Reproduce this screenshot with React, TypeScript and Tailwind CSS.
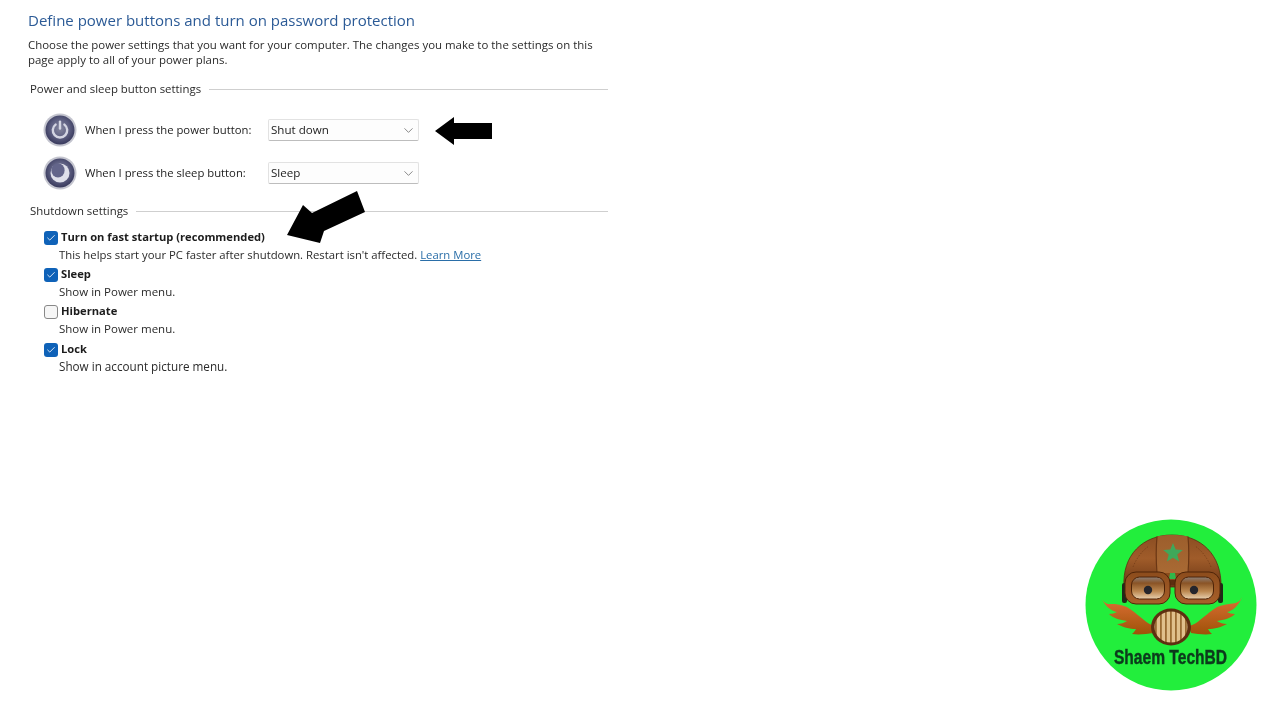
import { ChevronDown, Check } from "lucide-react";

function PowerOrb({ kind }: { kind: "power" | "sleep" }) {
  const id = `orb-${kind}`;
  return (
    <svg width="34" height="34" viewBox="0 0 34 34" className="shrink-0 blur-[0.4px]">
      <defs>
        <radialGradient id={id} cx="50%" cy="45%" r="55%">
          <stop offset="0%" stopColor="#85879f" />
          <stop offset="60%" stopColor="#5c5e80" />
          <stop offset="100%" stopColor="#38395c" />
        </radialGradient>
      </defs>
      <circle cx="17" cy="17" r="16.5" fill="#c4c5cf" />
      <circle cx="17" cy="17" r="14.5" fill={`url(#${id})`} />
      {kind === "power" ? (
        <g fill="none" stroke="#d3d5e2" strokeWidth="2.4" strokeLinecap="round">
          <path d="M12.6 11.6a7.2 7.2 0 1 0 8.8 0" />
          <path d="M17 8.6v7" />
        </g>
      ) : (
        <g>
          <circle cx="17" cy="17" r="9.5" fill="#dfe0ea" />
          <ellipse cx="15" cy="14.4" rx="6.6" ry="7.2" fill="#63658a" />
        </g>
      )}
    </svg>
  );
}

function FakeSelect({ value }: { value: string }) {
  return (
    <div className="flex h-[22px] w-[151px] items-center justify-between rounded-[2px] border border-[#e2e2e2] border-b-[#bdbdbd] bg-[#fdfdfd] pl-[2px] pr-[2px] text-[11.6px] text-[#222]">
      <span>{value}</span>
      <ChevronDown size={15} strokeWidth={1.1} className="text-[#555]" />
    </div>
  );
}

function SectionHeading({ title }: { title: string }) {
  return (
    <div className="flex items-center gap-[8px] pl-[2px] text-[11.4px] leading-[16px] text-[#2a2a2a]">
      <span>{title}</span>
      <div className="h-px flex-1 bg-[#cfcfcf]" />
    </div>
  );
}

function Option({
  label,
  note,
  checked,
  noteClass,
  children,
}: {
  label: string;
  note: string;
  checked: boolean;
  noteClass: string;
  children?: React.ReactNode;
}) {
  return (
    <div className="pl-[16px]">
      <div className="flex h-[17px] items-center gap-[3px]">
        {checked ? (
          <div className="flex h-[14px] w-[14px] items-center justify-center rounded-[3px] bg-[#0f62b8]">
            <Check size={10} strokeWidth={2} className="text-white" />
          </div>
        ) : (
          <div className="h-[14px] w-[14px] rounded-[3px] border border-[#888] bg-[#f6f6f6]" />
        )}
        <span className="text-[11.2px] font-bold text-[#1c1c1c]">{label}</span>
      </div>
      <div className={`h-[17px] pl-[15px] leading-[17px] text-[#2a2a2a] ${noteClass}`}>
        {note}
        {children}
      </div>
    </div>
  );
}

const leftWing =
  "M17 80C20 86 25 85 30 85C36 86 41 87 45 90C51 94 55 98 59 101C62 104 66 106 70 107L68 114C62 115 54 116 47 115C49 113 50 112 51 110C45 110 37 108 32 105C36 105 39 104 42 102C35 101 28 99 24 95C27 95 30 94 32 93C26 92 20 87 17 80Z";
const rightWing =
  "M157 78C154 85 149 84 144 85C138 86 133 87 129 90C123 94 119 98 115 101C112 104 108 106 104 107L106 114C112 115 120 116 127 115C125 113 124 112 123 110C129 110 137 108 142 105C138 105 135 104 132 102C139 101 146 99 150 95C147 95 144 94 142 93C148 92 154 86 157 78Z";

function Logo() {
  return (
    <svg width="172" height="172" viewBox="0 0 172 172" className="absolute left-[1085px] top-[519px] blur-[0.3px]">
      <defs>
        <linearGradient id="dome" x1="0" y1="0" x2="0" y2="1">
          <stop offset="0%" stopColor="#8a4d22" />
          <stop offset="45%" stopColor="#a05c2a" />
          <stop offset="100%" stopColor="#6a3614" />
        </linearGradient>
        <linearGradient id="stripe" x1="0" y1="0" x2="0" y2="1">
          <stop offset="0%" stopColor="#9c5e2c" />
          <stop offset="100%" stopColor="#a96a34" />
        </linearGradient>
        <linearGradient id="frame" x1="0" y1="0" x2="0" y2="1">
          <stop offset="0%" stopColor="#8c4c1c" />
          <stop offset="100%" stopColor="#a8602a" />
        </linearGradient>
        <linearGradient id="lens" x1="0" y1="0" x2="0" y2="1">
          <stop offset="0%" stopColor="#8d8078" />
          <stop offset="28%" stopColor="#8a5426" />
          <stop offset="65%" stopColor="#bc8850" />
          <stop offset="100%" stopColor="#e8d0b0" />
        </linearGradient>
        <linearGradient id="wing" x1="0" y1="0" x2="0" y2="1">
          <stop offset="0%" stopColor="#dc6e34" />
          <stop offset="100%" stopColor="#9e5208" />
        </linearGradient>
        <pattern id="grille" width="5" height="4" patternUnits="userSpaceOnUse">
          <rect width="5" height="4" fill="#e0c08c" />
          <rect width="1.8" height="4" fill="#9a6c32" />
        </pattern>
      </defs>
      <circle cx="86" cy="86" r="85.5" fill="#22ee3c" />
      <path d={leftWing} fill="url(#wing)" />
      <path d={rightWing} fill="url(#wing)" />
      {/* helmet */}
      <path d="M39 68C37 36 58 16 87 16s50 20 49 52z" fill="url(#dome)" stroke="#5c2e10" strokeWidth="0.8" />
      <path d="M72 17.5C71 28 71 42 72 54H103C104 42 104 28 103 17.5C93 15.6 82 15.6 72 17.5Z" fill="url(#stripe)" />
      <path d="M72 17.5C71 28 71 42 72 54M103 17.5C104 28 104 42 103 54" fill="none" stroke="#6a3614" strokeWidth="1.2" />
      <path d="M48 48C52 38 58 31 64 27M126 48C122 38 116 31 110 27" fill="none" stroke="#6a3614" strokeWidth="0.6" strokeDasharray="1.5 1.5" />
      <path
        d="M88 24l2.7 6.6 7.1.5-5.5 4.5 1.8 6.9-6.1-3.8-6.1 3.8 1.8-6.9-5.5-4.5 7.1-.5z"
        fill="#3fa85a"
      />
      {/* goggles */}
      <rect x="37" y="64" width="5" height="20" rx="2" fill="#1f2a18" />
      <rect x="133" y="64" width="5" height="20" rx="2" fill="#1f2a18" />
      <path d="M80 54H95L93 64H82Z" fill="#8c4c1c" />
      <path d="M85 54H90L91 60H84Z" fill="#2fb84a" />
      <rect x="80" y="61" width="15" height="5" fill="#5c2e10" />
      <rect x="40" y="53" width="45" height="32" rx="11" fill="url(#frame)" stroke="#4e2408" strokeWidth="1" />
      <rect x="90" y="53" width="45" height="32" rx="11" fill="url(#frame)" stroke="#4e2408" strokeWidth="1" />
      <rect x="46.5" y="58" width="33" height="22" rx="8" fill="url(#lens)" stroke="#4e2408" strokeWidth="1" />
      <rect x="95.5" y="58" width="33" height="22" rx="8" fill="url(#lens)" stroke="#4e2408" strokeWidth="1" />
      <circle cx="63" cy="71" r="4.2" fill="#25252c" />
      <circle cx="109" cy="71" r="4.2" fill="#25252c" />
      {/* mask */}
      <ellipse cx="86" cy="108" rx="20" ry="18.5" fill="#5e2f10" />
      <ellipse cx="86" cy="108" rx="16.5" ry="15.5" fill="url(#grille)" />
      <text
        transform="translate(85.5 145) scale(0.78 1)"
        textAnchor="middle"
        fontFamily="'Liberation Sans', sans-serif"
        fontWeight="700"
        fontSize="20"
        fill="#0c3a1c"
        stroke="#0c3a1c"
        strokeWidth="0.4"
      >
        Shaem TechBD
      </text>
    </svg>
  );
}

export default function App() {
  return (
    <div
      className="relative h-[720px] w-[1280px] overflow-hidden bg-white"
      style={{ fontFamily: "'Open Sans', 'Noto Sans', sans-serif" }}
    >
      <div className="ml-[28px] w-[580px] pt-[10px] blur-[0.3px]">
        <h1 className="text-[15px] leading-[20px] text-[#2b5a96]">
          Define power buttons and turn on password protection
        </h1>
        <p className="mt-[6px] w-[580px] translate-y-[1px] text-[11.45px] leading-[15px] text-[#2a2a2a]">
          Choose the power settings that you want for your computer. The changes you make to the settings on this page
          apply to all of your power plans.
        </p>

        <div className="mt-[15px]">
          <SectionHeading title="Power and sleep button settings" />
        </div>

        <div className="mt-[16px] flex flex-col gap-[9px] pl-[15px]">
          <div className="flex h-[34px] items-center">
            <PowerOrb kind="power" />
            <span className="ml-[8px] w-[183px] text-[11.3px] text-[#222]">When I press the power button:</span>
            <FakeSelect value="Shut down" />
          </div>
          <div className="flex h-[34px] items-center">
            <PowerOrb kind="sleep" />
            <span className="ml-[8px] w-[183px] text-[11.3px] text-[#222]">When I press the sleep button:</span>
            <FakeSelect value="Sleep" />
          </div>
        </div>

        <div className="mt-[13px]">
          <SectionHeading title="Shutdown settings" />
        </div>

        <div className="mt-[10px] flex flex-col gap-[3px]">
          <Option
            label="Turn on fast startup (recommended)"
            note="This helps start your PC faster after shutdown. Restart isn't affected. "
            checked
            noteClass="text-[11.32px]"
          >
            <span className="text-[#2a6ea8] underline">Learn More</span>
          </Option>
          <Option label="Sleep" note="Show in Power menu." checked noteClass="text-[11.5px]" />
          <Option label="Hibernate" note="Show in Power menu." checked={false} noteClass="text-[11.5px]" />
          <div className="mt-[1px]">
            <Option label="Lock" note="Show in account picture menu." checked noteClass="text-[11.7px]" />
          </div>
        </div>
      </div>

      {/* annotation arrows */}
      <svg width="70" height="30" viewBox="0 0 70 30" className="absolute left-[430px] top-[116px]">
        <polygon points="5,15 24,1 24,7 62,7 62,23 24,23 24,29" fill="#000" />
      </svg>
      <svg width="90" height="60" viewBox="280 188 90 60" className="absolute left-[280px] top-[188px]">
        <polygon points="287,235 303,205 312,213 357,191 365,212 324,231 320,243" fill="#000" />
      </svg>

      <Logo />
    </div>
  );
}
